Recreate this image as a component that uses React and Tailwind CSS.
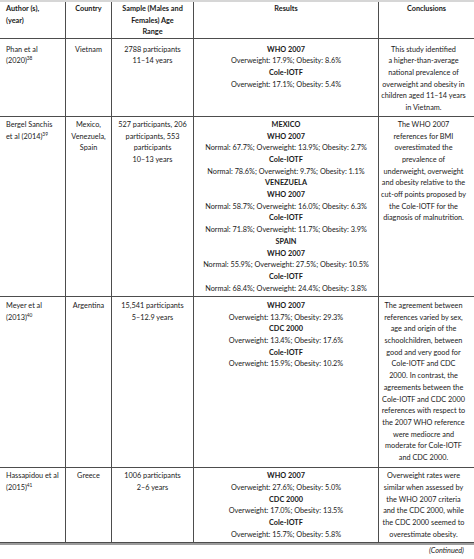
import React from "react";

const cols = "grid grid-cols-[65px_46px_82px_185px_96px]";

function Lines({ items, bold = [] }) {
  return items.map((t, i) => (
    <div key={i} className={"whitespace-nowrap " + (bold.includes(i) ? "font-bold" : "")}>
      {t}
    </div>
  ));
}

function Author({ name, year, ref }) {
  return (
    <>
      <div className="whitespace-nowrap">{name}</div>
      <div className="whitespace-nowrap">
        {year}
        <sup className="text-[4.8px] -top-[3px]">{ref}</sup>
      </div>
    </>
  );
}

function Row({ pad, author, country, sample, results, conclusions }) {
  return (
    <div className={cols + " border-b border-[#4d4d4d]"}>
      <div className={"pl-[6px] " + pad}>{author}</div>
      <div className={"border-l border-[#4d4d4d] text-center " + pad}>
        <Lines items={country} />
      </div>
      <div className={"border-l border-[#4d4d4d] text-center " + pad}>
        <Lines items={sample} />
      </div>
      <div className={"border-l border-[#4d4d4d] text-center " + pad}>{results}</div>
      <div className={"border-l border-[#4d4d4d] text-center pr-[6px] " + pad}>
        <Lines items={conclusions} />
      </div>
    </div>
  );
}

function Res({ rows }) {
  // rows: [text, bold?]
  return rows.map(([t, b], i) => (
    <div key={i} className={"whitespace-nowrap " + (b ? "font-bold" : "")}>
      {t}
    </div>
  ));
}

export default function App() {
  return (
    <div className="w-[474px] h-[559px] bg-white font-['Lato','Open_Sans',sans-serif] text-[7.3px] leading-[11.7px] text-[#1a1a1a]">
      <div className="border-t-2 border-[#d6d6d6]">
        <div className={cols + " border-b border-[#4d4d4d] font-bold"}>
          <div className="pl-[6px] pt-[1px] pb-[2.5px]">
            <div>Author (s),</div>
            <div>(year)</div>
          </div>
          <div className="border-l border-[#4d4d4d] text-center pt-[1px]">Country</div>
          <div className="border-l border-[#4d4d4d] text-center pt-[1px]">
            <div>Sample (Males and</div>
            <div>Females) Age</div>
            <div>Range</div>
          </div>
          <div className="border-l border-[#4d4d4d] text-center pt-[1px]">Results</div>
          <div className="border-l border-[#4d4d4d] text-center pt-[1px]">Conclusions</div>
        </div>

        <Row
          pad="pt-[4.5px] pb-[2px]"
          author={<Author name="Phan et al" year="(2020)" ref="38" />}
          country={["Vietnam"]}
          sample={["2788 participants", "11–14 years"]}
          results={
            <Res
              rows={[
                ["WHO 2007", true],
                ["Overweight: 17.9%; Obesity: 8.6%"],
                ["Cole-IOTF", true],
                ["Overweight: 17.1%; Obesity: 5.4%"],
              ]}
            />
          }
          conclusions={[
            "This study identified",
            "a higher-than-average",
            "national prevalence of",
            "overweight and obesity in",
            "children aged 11–14 years",
            "in Vietnam.",
          ]}
        />

        <Row
          pad="pt-[2px] pb-[1.5px]"
          author={<Author name="Bergel Sanchis" year="et al (2014)" ref="39" />}
          country={["Mexico,", "Venezuela,", "Spain"]}
          sample={["527 participants, 206", "participants, 553", "participants", "10–13 years"]}
          results={
            <Res
              rows={[
                ["MEXICO", true],
                ["WHO 2007", true],
                ["Normal: 67.7%; Overweight: 13.9%; Obesity: 2.7%"],
                ["Cole-IOTF", true],
                ["Normal: 78.6%; Overweight: 9.7%; Obesity: 1.1%"],
                ["VENEZUELA", true],
                ["WHO 2007", true],
                ["Normal: 58.7%; Overweight: 16.0%; Obesity: 6.3%"],
                ["Cole-IOTF", true],
                ["Normal: 71.8%; Overweight: 11.7%; Obesity: 3.9%"],
                ["SPAIN", true],
                ["WHO 2007", true],
                ["Normal: 55.9%; Overweight: 27.5%; Obesity: 10.5%"],
                ["Cole-IOTF", true],
                ["Normal: 68.4%; Overweight: 24.4%; Obesity: 3.8%"],
              ]}
            />
          }
          conclusions={[
            "The WHO 2007",
            "references for BMI",
            "overestimated the",
            "prevalence of",
            "underweight, overweight",
            "and obesity relative to the",
            "cut-off points proposed by",
            "the Cole-IOTF for the",
            "diagnosis of malnutrition.",
          ]}
        />

        <Row
          pad="pt-[3px] pb-[3px]"
          author={<Author name="Meyer et al" year="(2013)" ref="40" />}
          country={["Argentina"]}
          sample={["15,541 participants", "5–12.9 years"]}
          results={
            <Res
              rows={[
                ["WHO 2007", true],
                ["Overweight: 13.7%; Obesity: 29.3%"],
                ["CDC 2000", true],
                ["Overweight: 13.4%; Obesity: 17.6%"],
                ["Cole-IOTF", true],
                ["Overweight: 15.9%; Obesity: 10.2%"],
              ]}
            />
          }
          conclusions={[
            "The agreement between",
            "references varied by sex,",
            "age and origin of the",
            "schoolchildren, between",
            "good and very good for",
            "Cole-IOTF and CDC",
            "2000. In contrast, the",
            "agreements between the",
            "Cole-IOTF and CDC 2000",
            "references with respect to",
            "the 2007 WHO reference",
            "were mediocre and",
            "moderate for Cole-IOTF",
            "and CDC 2000.",
          ]}
        />

        <div className="border-b-2 border-[#9c9c9c]">
          <Row
            pad="pt-[2.5px] pb-[1.5px]"
            author={<Author name="Hassapidou et al" year="(2015)" ref="41" />}
            country={["Greece"]}
            sample={["1006 participants", "2–6 years"]}
            results={
              <Res
                rows={[
                  ["WHO 2007", true],
                  ["Overweight: 27.6%; Obesity: 5.0%"],
                  ["CDC 2000", true],
                  ["Overweight: 17.0%; Obesity: 13.5%"],
                  ["Cole-IOTF", true],
                  ["Overweight: 15.7%; Obesity: 5.8%"],
                ]}
              />
            }
            conclusions={[
              "Overweight rates were",
              "similar when assessed by",
              "the WHO 2007 criteria",
              "and the CDC 2000, while",
              "the CDC 2000 seemed to",
              "overestimate obesity.",
            ]}
          />
        </div>
        <div className="text-right italic pr-[10px]">(Continued)</div>
      </div>
    </div>
  );
}
